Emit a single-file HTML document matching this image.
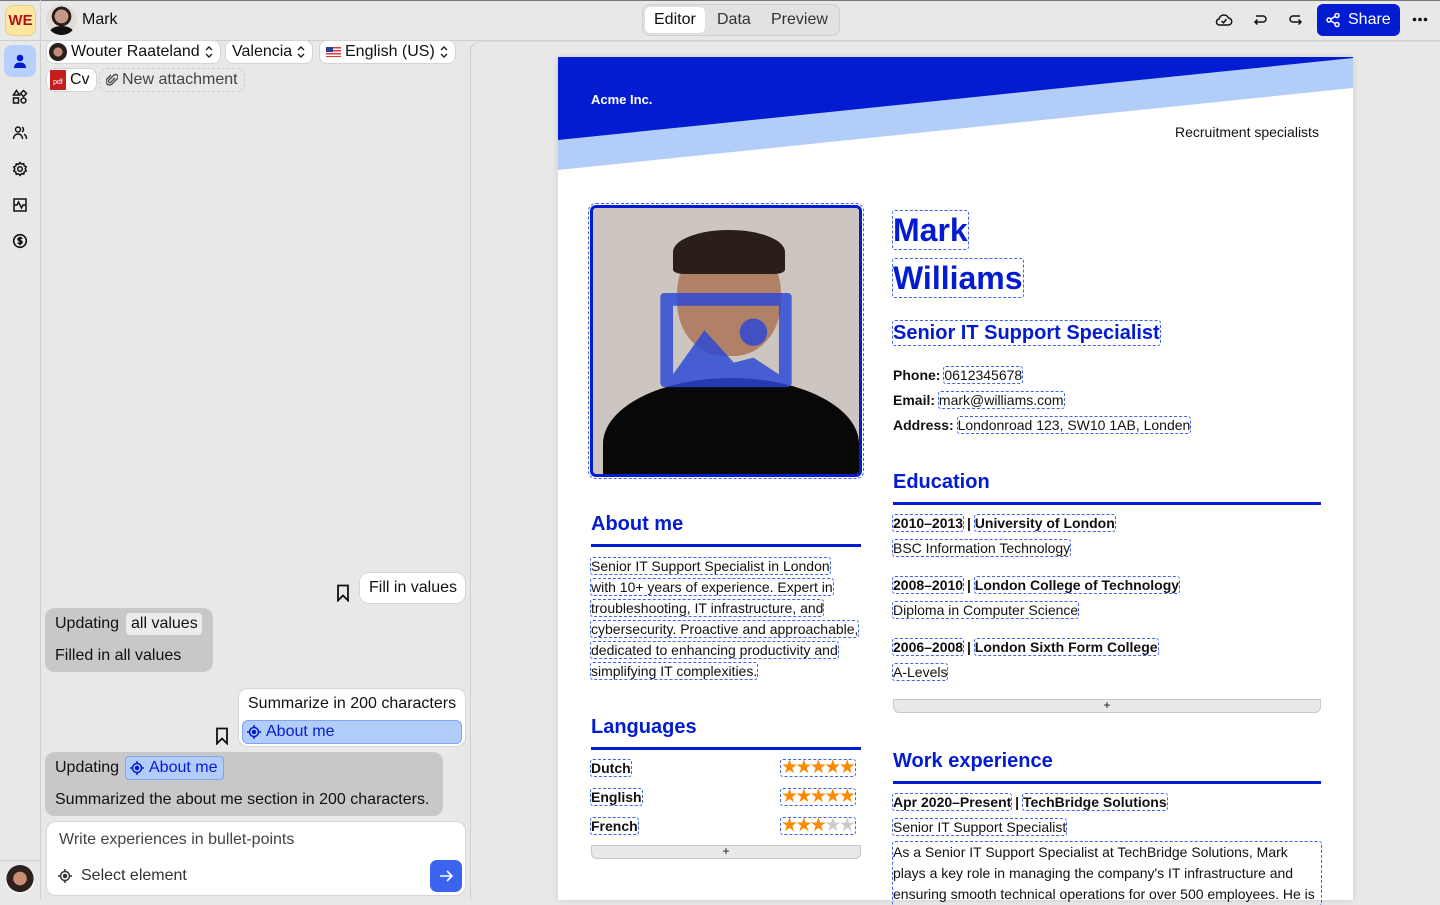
<!DOCTYPE html>
<html><head><meta charset="utf-8"><style>
*{box-sizing:border-box;margin:0;padding:0}
body{width:1440px;height:900px;overflow:hidden;background:#e8e8e8;font-family:"Liberation Sans",Arial,sans-serif;color:#111;position:relative}
.a{position:absolute}
.d{outline:1px dashed #3d63f0;outline-offset:0;border-radius:2px}
.pill{position:absolute;background:#fff;border:1px solid #d4d4d4;border-radius:8px;height:24px;font-size:16px;line-height:22px;padding:0 6px;display:flex;align-items:center;gap:4px}
.h{position:absolute;font-weight:bold;font-size:20px;color:#031bd1}
.rule{position:absolute;height:3px;background:#031bd1}
.t{position:absolute;font-size:14px;line-height:18px;white-space:nowrap}
.stars{color:#f98a00;font-size:19px;letter-spacing:-2.6px;line-height:16px;padding-right:2px}
.plus{position:absolute;height:14px;background:#e8e8e8;border:1px solid #c8c8c8;border-radius:0 0 6px 6px;font-size:12px;text-align:center;line-height:11px}
</style></head><body>
<div class="a" style="left:0;top:0;width:1440px;height:1px;background:#777"></div>
<div class="a" style="left:0;top:40px;width:1440px;height:1px;background:#cfcfcf"></div>
<div class="a" style="left:40px;top:0;width:1px;height:900px;background:#cfcfcf"></div>
<div class="a" style="left:5px;top:5px;width:31px;height:31px;background:#fde7a0;border:1px solid #e6cf8a;border-radius:8px;font-weight:bold;font-size:15px;color:#b0131a;text-align:center;line-height:29px">WE</div>
<div class="a" style="left:46px;top:4px;width:31px;height:31px;border-radius:50%;background:radial-gradient(circle at 50% 40%,#c49a85 0 28%,#2a1d18 29% 40%,#e2ddd8 41%);overflow:hidden"><div style="position:absolute;left:4px;top:22px;width:23px;height:12px;background:#111;border-radius:50% 50% 0 0"></div></div>
<div class="a" style="left:82px;top:11px;font-size:16px">Mark</div>
<div class="a" style="left:4px;top:45px;width:32px;height:32px;background:#b7cffb;border-radius:8px"></div>
<svg class="a" style="left:12px;top:53px" width="16" height="16" viewBox="0 0 16 16"><circle cx="8" cy="5" r="3.3" fill="#031bd1"/><path d="M2 15c0-4 2.5-5.5 6-5.5s6 1.5 6 5.5z" fill="#031bd1"/></svg>
<svg class="a" style="left:12px;top:89px" width="16" height="16" viewBox="0 0 16 16" fill="none" stroke="#111" stroke-width="1.5"><path d="M4.5 1.5l3 4.5h-6z"/><rect x="1.5" y="9" width="5" height="5"/><path d="M11.5 1.5l3 3-3 3-3-3z"/><circle cx="11.5" cy="11.5" r="2.5"/></svg>
<svg class="a" style="left:12px;top:125px" width="16" height="16" viewBox="0 0 16 16" fill="none" stroke="#111" stroke-width="1.4"><circle cx="6" cy="4.5" r="2.5"/><path d="M1.5 14c0-3 2-5 4.5-5s4.5 2 4.5 5"/><path d="M10 2.2a2.5 2.5 0 010 4.6M12 9.3c1.5.6 2.5 2.4 2.5 4.7"/></svg>
<svg class="a" style="left:12px;top:161px" width="16" height="16" viewBox="0 0 16 16" fill="none" stroke="#111" stroke-width="1.5"><circle cx="8" cy="8" r="2.3"/><path d="M8 1.5l1.5 1.7 2.2-.5.5 2.2 2 1-1 2 1 2-2 1-.5 2.2-2.2-.5L8 14.5l-1.5-1.7-2.2.5-.5-2.2-2-1 1-2-1-2 2-1 .5-2.2 2.2.5z"/></svg>
<svg class="a" style="left:12px;top:197px" width="16" height="16" viewBox="0 0 16 16" fill="none" stroke="#111" stroke-width="1.5"><rect x="2" y="2" width="12" height="12"/><path d="M2 8h3l1.5-3 3 6 1.5-3h3"/></svg>
<svg class="a" style="left:12px;top:233px" width="16" height="16" viewBox="0 0 16 16" fill="none" stroke="#111" stroke-width="1.6"><circle cx="8" cy="8" r="6.3"/><path d="M10 6c-.3-.8-1-1.2-2-1.2s-2 .5-2 1.4c0 2 4 1 4 3 0 .9-1 1.5-2 1.5s-1.8-.5-2-1.3M8 3.8v8.4"/></svg>
<div class="a" style="left:0;top:860px;width:40px;height:1px;background:#cfcfcf"></div>
<div class="a" style="left:5px;top:865px;width:30px;height:30px;border-radius:50%;background:radial-gradient(circle at 50% 45%,#c98d70 0 30%,#2b211d 31% 60%,#eee 61%)"></div>
<div class="pill" style="left:46px;top:40px;padding-left:2px"><span style="display:inline-block;width:18px;height:18px;border-radius:50%;background:radial-gradient(circle,#c08e76 0 35%,#2a1f1b 36%)"></span>Wouter Raateland <svg width="10" height="14" viewBox="0 0 10 14" fill="none" stroke="#222" stroke-width="1.4"><path d="M2 5l3-3 3 3M2 9l3 3 3-3"/></svg></div>
<div class="pill" style="left:225px;top:40px">Valencia <svg width="10" height="14" viewBox="0 0 10 14" fill="none" stroke="#222" stroke-width="1.4"><path d="M2 5l3-3 3 3M2 9l3 3 3-3"/></svg></div>
<div class="pill" style="left:319px;top:40px"><span style="display:inline-block;width:15px;height:10px;background:repeating-linear-gradient(#e0363a 0 1.5px,#fff 1.5px 3px);position:relative"><span style="position:absolute;left:0;top:0;width:7px;height:5px;background:#2e3f8f"></span></span>English (US) <svg width="10" height="14" viewBox="0 0 10 14" fill="none" stroke="#222" stroke-width="1.4"><path d="M2 5l3-3 3 3M2 9l3 3 3-3"/></svg></div>
<div class="pill" style="left:46px;top:68px;padding-left:3px"><span style="display:inline-block;width:16px;height:20px;background:#c51d1d;border-radius:1px;color:#fff;font-size:7px;line-height:26px;text-align:center">pdf</span>Cv</div>
<div class="pill" style="left:99px;top:68px;background:transparent;border:1px dashed #cfcfcf;color:#444"><svg width="12" height="14" viewBox="0 0 12 14" fill="none" stroke="#444" stroke-width="1.3"><path d="M9 5L4.5 9.5a1.5 1.5 0 01-2-2L8 2a2.5 2.5 0 013.5 3.5L6 11a3.5 3.5 0 01-5-5l4-4"/></svg>New attachment</div>
<div class="a" style="left:642px;top:4px;width:198px;height:32px;background:#e2e2e2;border:1px solid #cfcfcf;border-radius:8px"></div>
<div class="a" style="left:644px;top:6px;width:62px;height:28px;background:#fff;border:1px solid #ddd;border-radius:6px"></div>
<div class="a" style="left:654px;top:11px;font-size:16px">Editor</div>
<div class="a" style="left:717px;top:11px;font-size:16px;color:#333">Data</div>
<div class="a" style="left:771px;top:11px;font-size:16px;color:#333">Preview</div>
<svg class="a" style="left:1215px;top:12px" width="18" height="16" viewBox="0 0 18 16" fill="none" stroke="#111" stroke-width="1.5"><path d="M5 13h8a3.5 3.5 0 00.5-7A5 5 0 004 7 3 3 0 005 13z"/><path d="M6.5 9l2 1.8 3-3.5"/></svg>
<svg class="a" style="left:1252px;top:12px" width="16" height="16" viewBox="0 0 16 16" fill="none" stroke="#111" stroke-width="1.5"><path d="M4 4h7a3 3 0 010 6H3M5.5 7.5L3 10l2.5 2.5"/></svg>
<svg class="a" style="left:1288px;top:12px" width="16" height="16" viewBox="0 0 16 16" fill="none" stroke="#111" stroke-width="1.5"><path d="M12 4H5a3 3 0 000 6h8M10.5 7.5L13 10l-2.5 2.5"/></svg>
<div class="a" style="left:1317px;top:4px;width:83px;height:32px;background:#031bd1;border-radius:6px;color:#fff;font-size:16px;line-height:32px;padding-left:31px">Share</div>
<svg class="a" style="left:1325px;top:12px" width="16" height="16" viewBox="0 0 16 16" fill="none" stroke="#fff" stroke-width="1.5"><circle cx="12" cy="3.5" r="2"/><circle cx="12" cy="12.5" r="2"/><circle cx="4" cy="8" r="2"/><path d="M6 7l4-2.5M6 9l4 2.5"/></svg>
<svg class="a" style="left:1412px;top:17px" width="16" height="5" viewBox="0 0 16 5"><circle cx="2.5" cy="2.5" r="1.8" fill="#111"/><circle cx="8" cy="2.5" r="1.8" fill="#111"/><circle cx="13.5" cy="2.5" r="1.8" fill="#111"/></svg>
<svg class="a" style="left:336px;top:584px" width="14" height="18" viewBox="0 0 14 18" fill="none" stroke="#111" stroke-width="1.8"><path d="M2 1.5h10v15l-5-5-5 5z"/></svg>
<div class="a" style="left:359px;top:572px;width:107px;height:32px;background:#fff;border:1px solid #d6d6d6;border-radius:10px;font-size:16px;line-height:30px;padding-left:9px">Fill in values</div>
<div class="a" style="left:45px;top:608px;width:168px;height:64px;background:#c8c8c8;border-radius:10px"></div>
<div class="a" style="left:55px;top:615px;font-size:16px">Updating</div>
<div class="a" style="left:126px;top:613px;width:76px;height:22px;background:#ececec;border-radius:4px;font-size:16px;line-height:22px;padding-left:5px">all values</div>
<div class="a" style="left:55px;top:647px;font-size:16px">Filled in all values</div>
<svg class="a" style="left:215px;top:727px" width="14" height="18" viewBox="0 0 14 18" fill="none" stroke="#111" stroke-width="1.8"><path d="M2 1.5h10v15l-5-5-5 5z"/></svg>
<div class="a" style="left:238px;top:688px;width:228px;height:59px;background:#fff;border:1px solid #d6d6d6;border-radius:10px"></div>
<div class="a" style="left:248px;top:695px;font-size:16px">Summarize in 200 characters</div>
<div class="a" style="left:242px;top:720px;width:220px;height:24px;background:#b3cdfb;border:1px solid #7ea4f5;border-radius:6px;color:#031bd1;font-size:16px;line-height:22px;padding-left:23px">About me</div>
<svg class="a" style="left:247px;top:725px" width="14" height="14" viewBox="0 0 14 14" fill="none" stroke="#031bd1" stroke-width="1.5"><circle cx="7" cy="7" r="4.5"/><circle cx="7" cy="7" r="1.5" fill="#031bd1"/><path d="M7 0v2M7 12v2M0 7h2M12 7h2"/></svg>
<div class="a" style="left:45px;top:752px;width:398px;height:64px;background:#c8c8c8;border-radius:10px"></div>
<div class="a" style="left:55px;top:759px;font-size:16px">Updating</div>
<div class="a" style="left:125px;top:756px;width:99px;height:24px;background:#b3cdfb;border:1px solid #7ea4f5;border-radius:4px;color:#031bd1;font-size:16px;line-height:22px;padding-left:23px">About me</div>
<svg class="a" style="left:130px;top:761px" width="14" height="14" viewBox="0 0 14 14" fill="none" stroke="#031bd1" stroke-width="1.5"><circle cx="7" cy="7" r="4.5"/><circle cx="7" cy="7" r="1.5" fill="#031bd1"/><path d="M7 0v2M7 12v2M0 7h2M12 7h2"/></svg>
<div class="a" style="left:55px;top:791px;font-size:16px">Summarized the about me section in 200 characters.</div>
<div class="a" style="left:46px;top:821px;width:420px;height:75px;background:#fff;border:1px solid #d6d6d6;border-radius:10px"></div>
<div class="a" style="left:59px;top:831px;font-size:16px;color:#444">Write experiences in bullet-points</div>
<svg class="a" style="left:58px;top:869px" width="14" height="14" viewBox="0 0 14 14" fill="none" stroke="#333" stroke-width="1.5"><circle cx="7" cy="7" r="4.5"/><circle cx="7" cy="7" r="1.5" fill="#333"/><path d="M7 0v2M7 12v2M0 7h2M12 7h2"/></svg>
<div class="a" style="left:81px;top:867px;font-size:16px;color:#333">Select element</div>
<div class="a" style="left:430px;top:860px;width:32px;height:32px;background:#3b64ee;border-radius:7px"></div>
<svg class="a" style="left:438px;top:868px" width="16" height="16" viewBox="0 0 16 16" fill="none" stroke="#fff" stroke-width="1.6"><path d="M2 8h12M9 3l5 5-5 5"/></svg>
<div class="a" style="left:470px;top:41px;width:970px;height:859px;border-left:1px solid #cfcfcf;border-top:1px solid #d8d8d8;border-top-left-radius:10px;background:#e8e8e8"></div>
<div class="a" style="left:558px;top:57px;width:795px;height:843px;background:#fff;box-shadow:0 0 6px rgba(0,0,0,.12)"></div>
<svg class="a" style="left:558px;top:57px" width="795" height="115"><polygon points="0,0 795,0 795,31 0,113" fill="#b3cdf9"/><polygon points="0,0 795,0 795,1 0,83" fill="#031bd1"/></svg>
<div class="a" style="left:591px;top:92px;font-size:13px;font-weight:bold;color:#fff">Acme Inc.</div>
<div class="a" style="left:1175px;top:124px;font-size:14px">Recruitment specialists</div>
<div class="a" style="left:590px;top:205px;width:272px;height:272px;border:3px solid #031bd1;outline:1px dashed #3d63f0;outline-offset:1px;border-radius:6px;overflow:hidden;background:#cdc6c0">
<div class="a" style="left:84px;top:28px;width:104px;height:120px;border-radius:48% 48% 45% 45%;background:#b08067"></div>
<div class="a" style="left:80px;top:22px;width:112px;height:44px;border-radius:50% 50% 10% 10%;background:#2a1e19"></div>
<div class="a" style="left:10px;top:170px;width:256px;height:110px;border-radius:50% 50% 0 0/60% 60% 0 0;background:#080808"></div>
<svg class="a" style="left:67px;top:85px" width="132" height="98" viewBox="0 0 134 100"><path d="M4 0h126a4 4 0 014 4v88a4 4 0 01-4 4H4a4 4 0 01-4-4V4a4 4 0 014-4zM13 13v70l32-45 30 33 20-5 26 17V13z" fill="#2a46d6" fill-opacity=".82" fill-rule="evenodd"/><circle cx="95" cy="40" r="14" fill="#2a46d6" fill-opacity=".82"/></svg>
</div>
<div class="a d" style="left:893px;top:211px;font-size:32px;font-weight:bold;color:#031bd1;line-height:38px">Mark</div>
<div class="a d" style="left:893px;top:259px;font-size:32px;font-weight:bold;color:#031bd1;line-height:38px">Williams</div>
<div class="a d" style="left:893px;top:321px;font-size:20px;font-weight:bold;color:#031bd1;line-height:24px">Senior IT Support Specialist</div>
<div class="t" style="left:893px;top:366px"><b>Phone:</b> <span class="d">0612345678</span></div>
<div class="t" style="left:893px;top:391px"><b>Email:</b> <span class="d">mark@williams.com</span></div>
<div class="t" style="left:893px;top:416px"><b>Address:</b> <span class="d">Londonroad 123, SW10 1AB, Londen</span></div>
<div class="h" style="left:893px;top:471px">Education</div>
<div class="rule" style="left:893px;top:502px;width:428px"></div>
<div class="t" style="left:893px;top:514px"><b><span class="d">2010–2013</span> | <span class="d">University of London</span></b></div>
<div class="t" style="left:893px;top:539px"><span class="d">BSC Information Technology</span></div>
<div class="t" style="left:893px;top:576px"><b><span class="d">2008–2010</span> | <span class="d">London College of Technology</span></b></div>
<div class="t" style="left:893px;top:601px"><span class="d">Diploma in Computer Science</span></div>
<div class="t" style="left:893px;top:638px"><b><span class="d">2006–2008</span> | <span class="d">London Sixth Form College</span></b></div>
<div class="t" style="left:893px;top:663px"><span class="d">A-Levels</span></div>
<div class="plus" style="left:893px;top:699px;width:428px">+</div>
<div class="h" style="left:893px;top:750px">Work experience</div>
<div class="rule" style="left:893px;top:781px;width:428px"></div>
<div class="t" style="left:893px;top:793px"><b><span class="d">Apr 2020–Present</span> | <span class="d">TechBridge Solutions</span></b></div>
<div class="t" style="left:893px;top:818px"><span class="d">Senior IT Support Specialist</span></div>
<div class="t d" style="left:893px;top:842px;width:428px;white-space:normal;line-height:21px">As a Senior IT Support Specialist at TechBridge Solutions, Mark plays a key role in managing the company's IT infrastructure and ensuring smooth technical operations for over 500 employees. He is</div>
<div class="h" style="left:591px;top:513px">About me</div>
<div class="rule" style="left:591px;top:544px;width:270px"></div>
<div class="t" style="left:591px;top:556px;line-height:21px"><span class="d">Senior IT Support Specialist in London</span><br><span class="d">with 10+ years of experience. Expert in</span><br><span class="d">troubleshooting, IT infrastructure, and</span><br><span class="d">cybersecurity. Proactive and approachable,</span><br><span class="d">dedicated to enhancing productivity and</span><br><span class="d">simplifying IT complexities.</span></div>
<div class="h" style="left:591px;top:716px">Languages</div>
<div class="rule" style="left:591px;top:747px;width:270px"></div>
<div class="t" style="left:591px;top:759px"><b class="d">Dutch</b></div>
<div class="t" style="left:591px;top:788px"><b class="d">English</b></div>
<div class="t" style="left:591px;top:817px"><b class="d">French</b></div>
<div class="a d stars" style="left:781px;top:760px">★★★★★</div>
<div class="a d stars" style="left:781px;top:789px">★★★★★</div>
<div class="a d stars" style="left:781px;top:818px">★★★<span style="color:#ccc">★★</span></div>
<div class="plus" style="left:591px;top:845px;width:270px">+</div>
</body></html>
